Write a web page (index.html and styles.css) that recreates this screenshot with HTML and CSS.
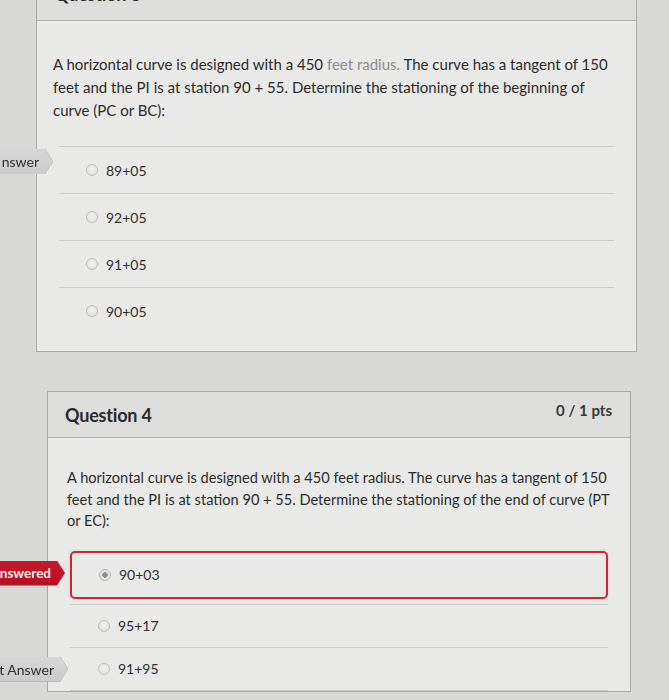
FILE: index.html
```html
<!DOCTYPE html>
<html lang="en">
<head>
<meta charset="utf-8">
<title>Quiz results</title>
<link rel="stylesheet" href="styles.css">
</head>
<body>
<main class="page">
  <section class="card card-q3">
    <header class="card-head">
      <h2 class="q-title">Question 3</h2>
      <span class="q-pts">0 / 1 pts</span>
    </header>
    <div class="card-body">
      <p class="q-text">A horizontal curve is designed with a 450 <span class="glare">feet radius.</span> The curve has a tangent of 150 feet and the PI is at station 90 + 55. Determine the stationing of the beginning of curve (PC or BC):</p>
      <ul class="answers">
        <li class="answer">
          <span class="tag-wrap"><span class="tag tag-gray">nswer</span></span>
          <span class="radio"></span><span class="a-text">89+05</span>
        </li>
        <li class="answer"><span class="radio"></span><span class="a-text">92+05</span></li>
        <li class="answer"><span class="radio"></span><span class="a-text">91+05</span></li>
        <li class="answer"><span class="radio"></span><span class="a-text">90+05</span></li>
      </ul>
    </div>
  </section>

  <section class="card card-q4">
    <header class="card-head">
      <h2 class="q-title">Question 4</h2>
      <span class="q-pts">0 / 1 pts</span>
    </header>
    <div class="card-body">
      <p class="q-text">A horizontal curve is designed with a 450 feet radius. The curve has a tangent of 150 feet and the PI is at station 90 + 55. Determine the stationing of the end of curve (PT or EC):</p>
      <ul class="answers">
        <li class="answer answer-selected">
          <span class="tag-wrap"><span class="tag tag-red">nswered</span></span>
          <div class="answer-box"><span class="radio radio-on"></span><span class="a-text">90+03</span></div>
        </li>
        <li class="answer"><span class="radio"></span><span class="a-text">95+17</span></li>
        <li class="answer">
          <span class="tag-wrap"><span class="tag tag-gray">t Answer</span></span>
          <span class="radio"></span><span class="a-text">91+95</span>
        </li>
      </ul>
    </div>
  </section>
</main>
</body>
</html>
```

FILE: styles.css
```css
* { box-sizing: border-box; }

html, body {
  margin: 0;
  padding: 0;
  overflow: hidden;
}

body {
  width: 669px;
  height: 700px;
  background: #d8d8d7;
  font-family: Lato, "Open Sans", Arial, sans-serif;
  color: #2e2e2e;
}

.page {
  display: flex;
  flex-direction: column;
}

.card {
  background: #e9e9e7;
  border: 1px solid #a9a9a9;
}

.card-q3 {
  margin: -34px 32px 0 36px;
}

.card-q4 {
  margin: 39px 38px 0 47px;
}

.card-head {
  display: flex;
  justify-content: space-between;
  align-items: center;
  background: #dddddb;
  border-bottom: 1px solid #b0b0b0;
  padding: 0 18px 0 17px;
}

.card-q3 .card-head { height: 54px; }
.card-q4 .card-head { height: 46px; }

.q-title {
  margin: 0;
  font-size: 18px;
  font-weight: 700;
  color: #2b2b2b;
  letter-spacing: -0.2px;
}

.q-pts {
  font-size: 15px;
  font-weight: 700;
  color: #3a3a3a;
  margin-bottom: 10px;
}

.card-body {
  padding: 0 18px;
}

.card-q3 .card-body { padding: 32px 12px 17px 16px; }
.card-q4 .card-body { padding-top: 29px; }

.q-text {
  margin: 0;
  font-size: 15px;
  line-height: 23px;
  color: #2c2c2c;
}

.card-q4 .q-text { line-height: 21.5px; font-size: 14.6px; padding-left: 1px; }

.glare { color: #8d8d8f; }

.answers {
  list-style: none;
  margin: 24px 4px 0 4px;
  padding: 0;
}

.card-q3 .answers { margin: 24px 10px 0 6px; }

.card-q4 .answers {
  margin-top: 19px;
  border-bottom: 1px solid #c6c6c6;
}

.answer {
  position: relative;
  display: flex;
  align-items: center;
  gap: 8px;
  height: 47px;
  padding-left: 27px;
  border-top: 1px solid #cdcdcd;
  font-size: 14px;
  color: #303030;
}

.card-q4 .answer { height: 43px; padding-left: 28px; }

.card-q4 .answer.answer-selected {
  height: auto;
  border-top: 0;
  padding: 0 0 5px 0;
}

.answer-box {
  display: flex;
  align-items: center;
  gap: 8px;
  width: 100%;
  height: 48px;
  padding-left: 27px;
  border: 2px solid #c8283c;
  border-radius: 5px;
  box-shadow: 0 0 2px rgba(220, 60, 80, 0.35);
}

.radio {
  flex: none;
  width: 12px;
  height: 12px;
  border-radius: 50%;
  border: 1px solid #bdbdbd;
  background: radial-gradient(circle at 50% 40%, #f2f2f2 0%, #dedede 100%);
}

.radio-on {
  background: radial-gradient(circle, #8f8f8f 0 2.5px, #e4e4e4 3px 100%);
  border-color: #b5b5b5;
}

.tag-wrap {
  position: absolute;
  right: 100%;
  top: 2px;
  margin-right: 6px;
  filter: drop-shadow(0 0 0.6px #6f6f6f);
}

.answer-selected .tag-wrap {
  top: 10px;
  margin-right: 5px;
  filter: none;
}

.card-q4 .answer:last-child .tag-wrap {
  top: 9px;
  margin-right: 2px;
}

.tag {
  display: block;
  height: 25px;
  line-height: 25px;
  padding: 0 14px 0 60px;
  font-size: 14px;
  white-space: nowrap;
  clip-path: polygon(0 0, calc(100% - 8px) 0, 100% 50%, calc(100% - 8px) 100%, 0 100%);
}

.tag-gray {
  background: linear-gradient(#d6d6d6, #cbcbcb);
  color: #2f2f2f;
}

.tag-red {
  background: linear-gradient(#c9192d, #b5101f);
  color: #fbeaea;
  font-weight: 700;
  font-size: 13.5px;
}
```
